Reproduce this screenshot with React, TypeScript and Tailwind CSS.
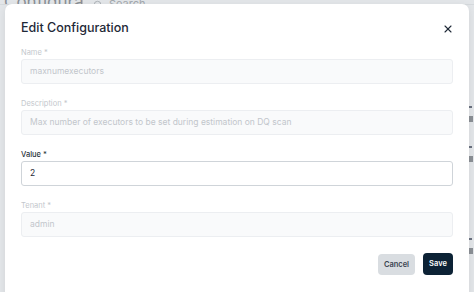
import { Search, X } from "lucide-react";

type FieldProps = {
  label: string;
  value: string;
  disabled?: boolean;
};

const Field = ({ label, value, disabled }: FieldProps) => (
  <div className="flex flex-col">
    <label
      className={`h-[11px] text-[7.5px] leading-[9px] ${
        disabled ? "text-[#c3c7cc]" : "text-[#2d3540] font-medium"
      }`}
    >
      {label} *
    </label>
    <div
      className={`flex h-[25px] items-center rounded-[3px] border px-[8px] text-[8.5px] ${
        disabled
          ? "border-[#eceef1] bg-[#f9fafb] text-[#c2c6cb]"
          : "border-[#cfd4d9] bg-white text-[#1f2937]"
      }`}
    >
      {value}
    </div>
  </div>
);

export default function App() {
  return (
    <div
      className="relative h-[292px] w-[474px] overflow-hidden bg-[#e3e6e9]"
      style={{ fontFamily: "Inter, 'Noto Sans', sans-serif" }}
    >
      {/* page behind the overlay */}
      <div className="flex h-[5px] items-end overflow-hidden border-b border-[#d6dadd]">
        <div className="-mb-[7px] w-[82px] pl-[4px] text-[17px] leading-[17px] text-[#8a9096]">
          Configura
        </div>
        <div className="h-full w-px bg-[#b9bec3]" />
        <div className="-mb-[6px] flex items-center gap-[6px] pl-[10px] text-[11px] leading-[11px] text-[#a3a9ae]">
          <Search className="h-[10px] w-[10px]" strokeWidth={2} />
          <span>Search</span>
        </div>
      </div>
      <div className="absolute right-0 top-[106px] flex w-[5px] flex-col gap-[8px]">
        <div className="h-[2px] w-[3px] bg-[#6b7280]" />
        <div className="h-[6px] w-[4px] bg-[#8b9096]" />
        <div className="mt-[16px] h-[2px] w-[3px] bg-[#6b7280]" />
        <div className="h-[6px] w-[4px] bg-[#8b9096]" />
        <div className="mt-[68px] h-[2px] w-[3px] bg-[#6b7280]" />
        <div className="h-[6px] w-[4px] bg-[#8b9096]" />
      </div>

      {/* modal */}
      <div className="absolute left-[5px] top-[4px] h-[300px] w-[464px] rounded-[7px] bg-white px-[16px] shadow-[0_2px_8px_rgba(0,0,0,0.08)]">
        <div className="flex h-[44px] items-center justify-between pt-[5px]">
          <h2 className="text-[12.5px] font-medium text-[#1f2937]">Edit Configuration</h2>
          <X className="mr-[-1px] h-[12px] w-[12px] text-[#1f2937]" strokeWidth={2.2} />
        </div>
        <div className="flex flex-col gap-[15px]">
          <Field label="Name" value="maxnumexecutors" disabled />
          <Field
            label="Description"
            value="Max number of executors to be set during estimation on DQ scan"
            disabled
          />
          <Field label="Value" value="2" />
          <Field label="Tenant" value="admin" disabled />
        </div>
        <div className="mt-[17px] flex justify-end gap-[8px]">
          <button className="h-[21px] w-[37px] rounded-[4px] bg-[#d9dde1] text-[7.5px] font-semibold text-[#3b4450]">
            Cancel
          </button>
          <button className="-mt-px h-[22px] w-[30px] rounded-[4px] bg-[#0c2235] text-[7.5px] font-semibold text-white">
            Save
          </button>
        </div>
      </div>
    </div>
  );
}
